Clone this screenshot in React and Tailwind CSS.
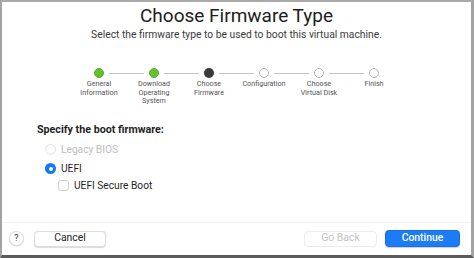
import React from "react";

const steps = [
  { label: ["General", "Information"], state: "done" },
  { label: ["Download", "Operating", "System"], state: "done" },
  { label: ["Choose", "Firmware"], state: "current" },
  { label: ["Configuration"], state: "todo" },
  { label: ["Choose", "Virtual Disk"], state: "todo" },
  { label: ["Finish"], state: "todo" },
];

function Dot({ state }) {
  if (state === "done")
    return <div className="w-[10px] h-[10px] rounded-full bg-[#62c22f] border border-[#56ad28] shrink-0" />;
  if (state === "current")
    return <div className="w-[10px] h-[10px] rounded-full bg-[#3a3a3a] shrink-0" />;
  return <div className="w-[10px] h-[10px] rounded-full bg-white border border-[#b5b5b5] shrink-0" />;
}

export default function App() {
  return (
    <div
      className="w-[474px] h-[258px] bg-white border-l-2 border-t-2 border-r-[3px] border-b-[3px] border-l-[#a3a3a3] border-t-[#a9a9a9] border-r-[#a3a3a3] border-b-[#5a5a5a] flex flex-col overflow-hidden"
      style={{ fontFamily: "Roboto, 'Noto Sans', sans-serif" }}
    >
      <div className="flex flex-col items-center">
        <div className="text-[19px] leading-[26px] text-[#1d1d1d] mt-[1px]">Choose Firmware Type</div>
        <div className="text-[10.3px] leading-[14px] text-[#3a3a3a] mt-[-1px]">
          Select the firmware type to be used to boot this virtual machine.
        </div>
      </div>

      <div className="flex flex-col items-center mt-[26px]">
        <div className="w-[330px] flex flex-col">
          <div className="flex items-center justify-center h-[10px]">
            {steps.map((s, i) => (
              <React.Fragment key={i}>
                <Dot state={s.state} />
                {i < steps.length - 1 && <div className="w-[35px] mx-[5px] h-px bg-[#c4c4c4]" />}
              </React.Fragment>
            ))}
          </div>
          <div className="grid grid-cols-6 mt-[2px]">
            {steps.map((s, i) => (
              <div key={i} className="flex flex-col items-center text-[7.2px] leading-[8.5px] text-[#555]">
                {s.label.map((l, j) => (
                  <div key={j}>{l}</div>
                ))}
              </div>
            ))}
          </div>
        </div>
      </div>

      <div className="ml-[35px] mt-[17px] flex flex-col">
        <div className="text-[10.7px] leading-[14px] font-bold text-[#1f1f1f]">Specify the boot firmware:</div>
        <div className="flex items-center mt-[6px] ml-[8px] h-[14px]">
          <div className="w-[11px] h-[11px] rounded-full border border-[#e2e2e2] bg-white" />
          <span className="ml-[5px] text-[10.2px] text-[#bcbcbc]">Legacy BIOS</span>
        </div>
        <div className="flex items-center mt-[5px] ml-[8px] h-[14px]">
          <div className="w-[11px] h-[11px] rounded-full bg-[#1278f6] flex items-center justify-center">
            <div className="w-[4px] h-[4px] rounded-full bg-white" />
          </div>
          <span className="ml-[5px] text-[10.2px] text-[#1f1f1f]">UEFI</span>
        </div>
        <div className="flex items-center mt-[3px] ml-[21px] h-[14px]">
          <div className="w-[11px] h-[11px] rounded-[3px] border border-[#cfcfcf] bg-white" />
          <span className="ml-[5px] text-[10.2px] text-[#1f1f1f]">UEFI Secure Boot</span>
        </div>
      </div>

      <div className="flex-1" />
      <div className="h-px bg-[#f0f0f0] mb-[7px]" />
      <div className="flex items-center h-[17px] mb-[8px] pl-[7px] pr-[11px]">
        <div className="w-[15px] h-[15px] rounded-full border border-[#dcdcdc] bg-white shadow-[0_0.5px_1px_rgba(0,0,0,0.15)] flex items-center justify-center text-[9px] text-[#333]">
          ?
        </div>
        <button className="ml-[10px] w-[72px] h-[16px] rounded-[4px] bg-white border border-[#dedede] shadow-[0_0.5px_1px_rgba(0,0,0,0.15)] text-[10.4px] leading-none text-[#222]">
          Cancel
        </button>
        <div className="flex-1" />
        <button className="w-[73px] h-[16px] rounded-[4px] bg-white border border-[#ececec] text-[10.4px] leading-none text-[#c2c2c2]">
          Go Back
        </button>
        <button className="ml-[8px] w-[75px] h-[17px] rounded-[4px] bg-[#1b7cf6] border border-[#1770e6] shadow-[0_0.5px_1px_rgba(0,0,0,0.2)] text-[10.4px] font-medium leading-none text-white">
          Continue
        </button>
      </div>
    </div>
  );
}
